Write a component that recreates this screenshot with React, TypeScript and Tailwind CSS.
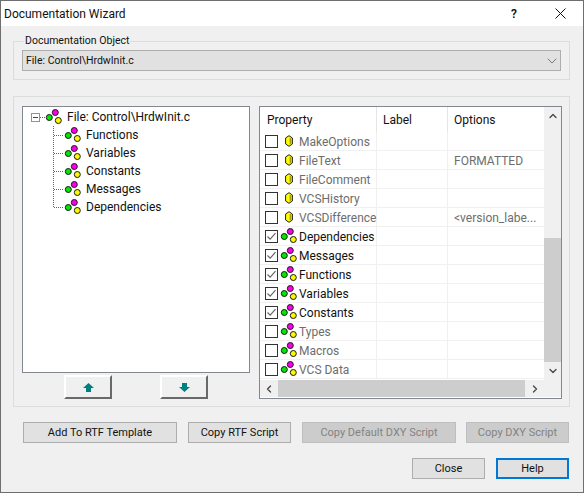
import React from 'react';
import { ChevronDown, ChevronUp, ChevronLeft, ChevronRight } from 'lucide-react';

// Magenta/green/yellow node glyph used by the tree and the property list
const NodeIcon = () => (
  <svg width="17" height="16" viewBox="0 0 17 16" className="shrink-0">
    <circle cx="4.3" cy="8.5" r="3" fill="#00e800" stroke="#1a1a1a" strokeWidth="1" />
    <circle cx="10.3" cy="3.5" r="3" fill="#f800e8" stroke="#1a1a1a" strokeWidth="1" />
    <circle cx="13.3" cy="11.5" r="3" fill="#fcf800" stroke="#1a1a1a" strokeWidth="1" />
  </svg>
);

const HexIcon = () => (
  <svg width="8" height="12" viewBox="0 0 8 12" className="shrink-0">
    <path d="M4 .7 L7.4 3 V9 L4 11.3 L.6 9 V3 Z" fill="#ffff00" stroke="#222" strokeWidth="1" />
    <path d="M4.6 2.4 L6.4 3.6 V8.4 L4.6 9.6 Z" fill="#a8a000" />
  </svg>
);

const Connector = ({ last }: { last: boolean }) => (
  <svg width="11" height="18" className="shrink-0">
    <line x1="0.5" y1="0" x2="0.5" y2={last ? 9 : 18} stroke="#666" strokeDasharray="1 1" />
    <line x1="1" y1="9.5" x2="11" y2="9.5" stroke="#666" strokeDasharray="1 1" />
  </svg>
);

const Check = ({ on }: { on: boolean }) => (
  <div className="w-[13px] h-[13px] border border-[#333] bg-white shrink-0 flex items-center justify-center">
    {on && (
      <svg width="11" height="11" viewBox="0 0 11 11">
        <path d="M1.5 5.5 L4.2 8.2 L9.5 2.2" stroke="#666" strokeWidth="1.2" fill="none" />
      </svg>
    )}
  </div>
);

type Row = { name: string; hex?: boolean; on?: boolean; opt?: string };

const rows: Row[] = [
  { name: 'MakeOptions', hex: true },
  { name: 'FileText', hex: true, opt: 'FORMATTED' },
  { name: 'FileComment', hex: true },
  { name: 'VCSHistory', hex: true },
  { name: 'VCSDifference', hex: true, opt: '<version_labe...' },
  { name: 'Dependencies', on: true },
  { name: 'Messages', on: true },
  { name: 'Functions', on: true },
  { name: 'Variables', on: true },
  { name: 'Constants', on: true },
  { name: 'Types' },
  { name: 'Macros' },
  { name: 'VCS Data' },
];

const treeKids = ['Functions', 'Variables', 'Constants', 'Messages', 'Dependencies'];

const WinButton = ({ label, width, disabled, focused }: { label: string; width: string; disabled?: boolean; focused?: boolean }) => (
  <div
    className={`h-[21px] shrink-0 flex items-center justify-center text-[11px] ${width} ${
      disabled
        ? 'bg-[#cccccc] border border-[#bfbfbf] text-[#838383]'
        : focused
          ? 'bg-[#e1e1e1] border-2 border-[#0078d7]'
          : 'bg-[#e1e1e1] border border-[#adadad]'
    }`}
  >
    {label}
  </div>
);

const ArrowButton = ({ d }: { d: string }) => (
  <div className="w-[48px] h-[24px] bg-[#f0f0f0] border-2 border-t-white border-l-white border-r-[#696969] border-b-[#696969] flex items-center justify-center">
    <svg width="11" height="9" viewBox="0 0 11 9">
      <path d={d} fill="#008080" />
    </svg>
  </div>
);

const App: React.FC = () => {
  return (
    <div className="w-[584px] h-[493px] box-border border border-[#6f6f6f] bg-[#f0f0f0] overflow-hidden text-[12px] leading-[16px] text-[#111] font-['Roboto',sans-serif] flex flex-col">
      {/* Title bar */}
      <div className="h-[25px] shrink-0 bg-white flex items-center pl-[3px]">
        <span className="flex-1">Documentation Wizard</span>
        <span className="w-[46px] text-center font-semibold">?</span>
        <svg width="11" height="11" viewBox="0 0 11 11" className="ml-[18px] mr-[17px]">
          <path d="M.5 .5 L10.5 10.5 M10.5 .5 L.5 10.5" stroke="#111" strokeWidth="1" />
        </svg>
      </div>

      {/* Documentation Object */}
      <div className="mt-[15px] ml-[12px] w-[557px] h-[39px] shrink-0 border border-[#dcdcdc] px-[8px] text-[10.5px]">
        <div className="-mt-[9px] ml-[2px] w-fit px-[1px] h-[16px] bg-[#f0f0f0]">Documentation Object</div>
        <div className="mt-[1px] h-[21px] bg-[#e1e1e1] border border-[#adadad] flex items-center justify-between pl-[3px]">
          <span>File: Control\HrdwInit.c</span>
          <ChevronDown size={16} strokeWidth={1} className="text-[#444]" />
        </div>
      </div>

      {/* Tree + property list */}
      <div className="mt-[16px] ml-[12px] w-[557px] h-[311px] shrink-0 border border-[#dcdcdc] pt-[9px] pl-[8px] flex gap-[9px]">
        <div className="w-[228px] flex flex-col">
          <div className="h-[267px] bg-white border border-[#828790] pl-[8px] pt-[1px]">
            <div className="h-[18px] flex items-center">
              <div className="w-[9px] h-[9px] border border-[#8a93a8] flex items-center justify-center shrink-0">
                <div className="w-[5px] h-px bg-[#2a4a90]" />
              </div>
              <div className="w-[5px] border-t border-dotted border-[#666]" />
              <NodeIcon />
              <span className="ml-[5px]">File: Control\HrdwInit.c</span>
            </div>
            {treeKids.map((t, i) => (
              <div key={t} className="h-[18px] flex items-center pl-[22px]">
                <Connector last={i === treeKids.length - 1} />
                <NodeIcon />
                <span className="ml-[5px]">{t}</span>
              </div>
            ))}
          </div>
          <div className="mt-[2px] flex gap-[48px] pl-[42px]">
            <ArrowButton d="M5.5 0 L11 5 H8 V9 H3 V5 H0 Z" />
            <ArrowButton d="M3 0 H8 V4 H11 L5.5 9 L0 4 H3 Z" />
          </div>
        </div>

        <div className="w-[303px] h-[293px] bg-white border border-[#828790] flex flex-col">
          <div className="flex flex-1 min-h-0">
            <div className="w-[284px] shrink-0">
              {/* Header */}
              <div className="h-[25px] flex items-center">
                <div className="w-[117px] h-full pl-[7px] pt-[1px] flex items-center border-r border-[#e5e5e5]">Property</div>
                <div className="w-[71px] h-full pl-[6px] pt-[1px] flex items-center border-r border-[#e5e5e5]">Label</div>
                <div className="pl-[6px] pt-[1px]">Options</div>
              </div>
              {rows.map((r) => (
                <div key={r.name} className="h-[19px] box-border flex border-b border-[#f0f0f0]">
                  <div className="w-[117px] flex items-center border-r border-[#f0f0f0] pl-[5px]">
                    <Check on={!!r.on} />
                    {r.hex ? (
                      <div className="ml-[7px] mr-[6px]">
                        <HexIcon />
                      </div>
                    ) : (
                      <div className="ml-[2px] mr-[2px]">
                        <NodeIcon />
                      </div>
                    )}
                    <span className={r.on ? 'pt-[1px]' : 'pt-[1px] text-[#6d6d6d]'}>{r.name}</span>
                  </div>
                  <div className="w-[71px] border-r border-[#f0f0f0]" />
                  <div className="flex-1 pl-[6px] pt-[1px] flex items-center text-[#6d6d6d] whitespace-nowrap overflow-hidden">{r.opt}</div>
                </div>
              ))}
            </div>
            {/* Vertical scrollbar */}
            <div className="w-[17px] flex flex-col items-center bg-[#f0f0f0] text-[#444]">
              <div className="h-[17px] flex items-center justify-center">
                <ChevronUp size={12} strokeWidth={2.5} />
              </div>
              <div className="h-[114px] shrink-0" />
              <div className="w-full h-[124px] shrink-0 bg-[#cdcdcd]" />
              <div className="h-[17px] flex items-center justify-center">
                <ChevronDown size={12} strokeWidth={2.5} />
              </div>
            </div>
          </div>
          {/* Horizontal scrollbar */}
          <div className="h-[17px] shrink-0 mb-px flex items-center bg-[#f0f0f0] text-[#444]">
            <div className="w-[18px] flex justify-center">
              <ChevronLeft size={12} strokeWidth={2.5} />
            </div>
            <div className="w-[247px] h-full bg-[#cdcdcd]" />
            <div className="w-[20px] flex justify-center">
              <ChevronRight size={12} strokeWidth={2.5} />
            </div>
          </div>
        </div>
      </div>

      {/* Bottom buttons */}
      <div className="mt-[15px] ml-[22px] flex gap-[10px]">
        <div className="flex gap-[11px]">
          <WinButton label="Add To RTF Template" width="w-[154px]" />
          <WinButton label="Copy RTF Script" width="w-[103px]" />
          <WinButton label="Copy Default DXY Script" width="w-[154px]" disabled />
        </div>
        <WinButton label="Copy DXY Script" width="w-[103px]" disabled />
      </div>
      <div className="mt-[15px] ml-[411px] flex gap-[11px]">
        <WinButton label="Close" width="w-[73px]" />
        <WinButton label="Help" width="w-[73px]" focused />
      </div>
    </div>
  );
};

export default App;
